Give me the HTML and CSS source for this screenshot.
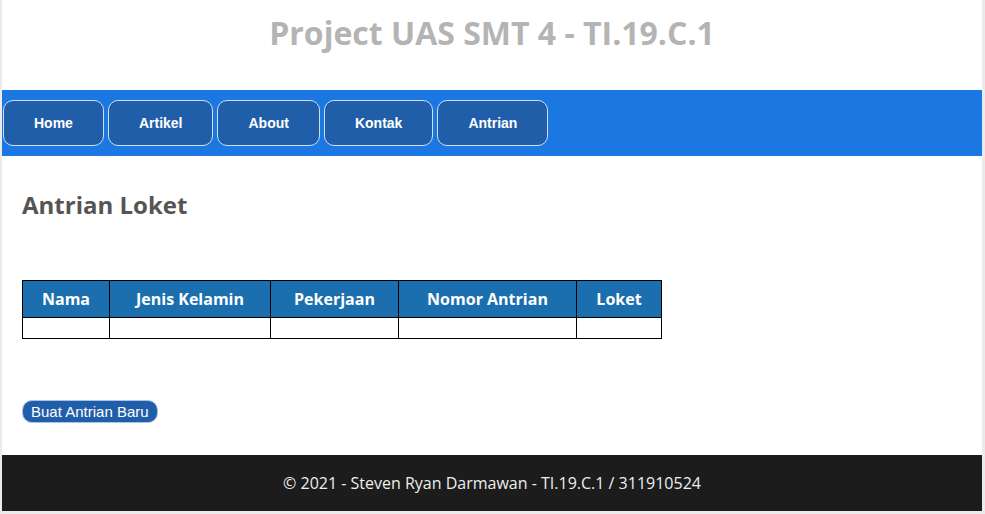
FILE: index.html
```html
<!DOCTYPE html>
<html lang="id">
<head>
<meta charset="utf-8">
<title>Project UAS SMT 4 - TI.19.C.1</title>
<link rel="stylesheet" href="styles.css">
</head>
<body>
<div class="page">
  <header class="site-header">
    <h1 class="site-title">Project UAS SMT 4 - TI.19.C.1</h1>
  </header>
  <nav class="main-nav">
    <a class="nav-btn" href="#">Home</a>
    <a class="nav-btn" href="#">Artikel</a>
    <a class="nav-btn" href="#">About</a>
    <a class="nav-btn" href="#">Kontak</a>
    <a class="nav-btn" href="#">Antrian</a>
  </nav>
  <main class="content">
    <h2 class="page-title">Antrian Loket</h2>
    <table class="queue-table">
      <thead>
        <tr>
          <th class="col-nama">Nama</th>
          <th class="col-jk">Jenis Kelamin</th>
          <th class="col-kerja">Pekerjaan</th>
          <th class="col-nomor">Nomor Antrian</th>
          <th class="col-loket">Loket</th>
        </tr>
      </thead>
      <tbody>
        <tr>
          <td></td><td></td><td></td><td></td><td></td>
        </tr>
      </tbody>
    </table>
    <button class="new-btn" type="button">Buat Antrian Baru</button>
  </main>
  <footer class="site-footer">© 2021 - Steven Ryan Darmawan - TI.19.C.1 / 311910524</footer>
</div>
</body>
</html>
```
FILE: styles.css
```css
html, body {
  margin: 0;
  padding: 0;
}
body {
  background: #ebebeb;
  font-family: "Open Sans", "Liberation Sans", sans-serif;
}
.page {
  width: 980px;
  margin: 0 0 0 2px;
  background: #ffffff;
}
.site-header {
  height: 90px;
  box-sizing: border-box;
  padding-top: 11px;
  text-align: center;
}
.site-title {
  margin: 0;
  font-size: 32px;
  font-weight: 700;
  line-height: normal;
  color: #b4b4b4;
}
.main-nav {
  display: flex;
  gap: 4px;
  height: 66px;
  box-sizing: border-box;
  padding: 10px 0 10px 1px;
  background: #1b78e2;
}
.nav-btn {
  display: flex;
  align-items: center;
  height: 46px;
  box-sizing: border-box;
  padding: 0 30px;
  border: 1px solid #cfe0f4;
  border-radius: 10px;
  background: #215ea9;
  color: #ffffff;
  font-family: "Liberation Sans", Arial, sans-serif;
  font-size: 14px;
  font-weight: 700;
  text-decoration: none;
}
.content {
  padding: 32px 20px 32px 20px;
}
.page-title {
  margin: 0 0 59px 0;
  font-size: 24px;
  font-weight: 700;
  line-height: normal;
  color: #555555;
}
.queue-table {
  border-collapse: collapse;
  width: 639px;
  table-layout: fixed;
}
.queue-table th {
  height: 37px;
  padding: 0;
  box-sizing: border-box;
  background: #1c6fae;
  color: #ffffff;
  font-size: 16px;
  font-weight: 700;
  border: 1px solid #000000;
  text-align: center;
}
.queue-table td {
  height: 20px;
  padding: 0;
  border: 1px solid #000000;
}
.col-nama { width: 87px; }
.col-jk { width: 161px; }
.col-kerja { width: 128px; }
.col-nomor { width: 178px; }
.col-loket { width: 85px; }
.new-btn {
  display: block;
  margin-top: 61px;
  height: 23px;
  padding: 0 8px;
  border: 1px solid #a9c6ea;
  border-radius: 10px;
  background: #215ea9;
  color: #ffffff;
  font-family: "Liberation Sans", Arial, sans-serif;
  font-size: 15px;
  line-height: 21px;
}
.site-footer {
  height: 56px;
  display: flex;
  align-items: center;
  justify-content: center;
  background: #1c1c1c;
  color: #eeeeee;
  font-size: 16px;
}
```
